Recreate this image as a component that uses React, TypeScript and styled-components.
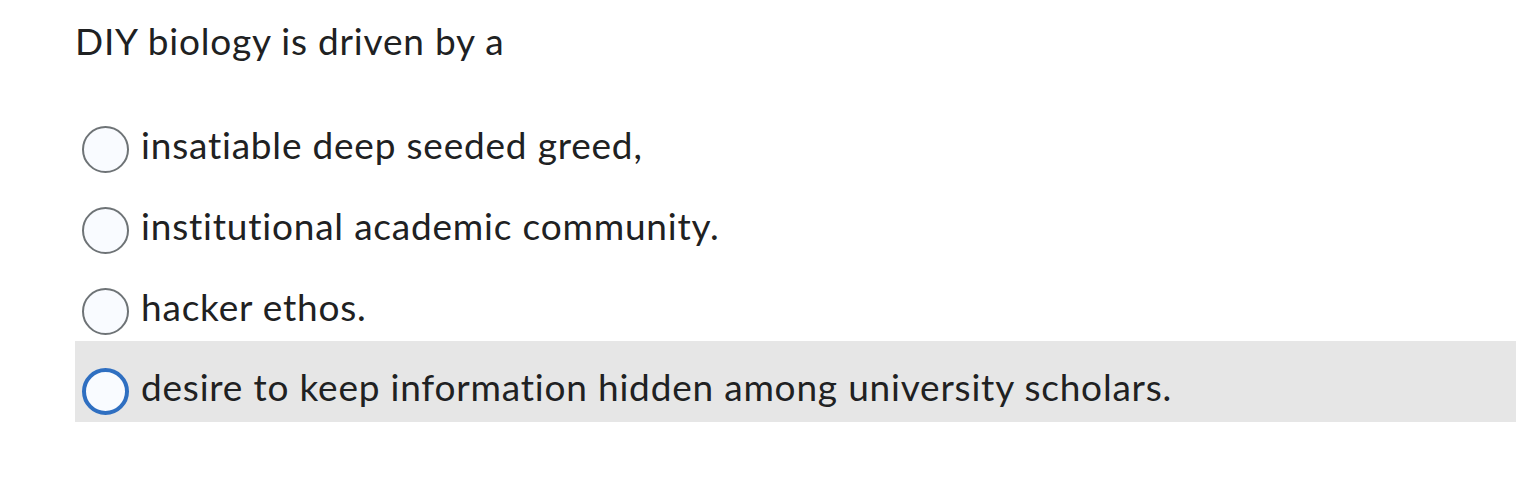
import React from 'react'
import styled, { createGlobalStyle } from 'styled-components'
// ______________________________________________________
//
const GlobalStyle = createGlobalStyle`
  body {
    margin: 0;
    background: #ffffff;
    font-family: Lato, "Open Sans", sans-serif;
    color: #202122;
    font-variant-ligatures: none;
  }
`
// ______________________________________________________
//
type Option = {
  label: string
  focused?: boolean
}

const options: Option[] = [
  { label: 'insatiable deep seeded greed,' },
  { label: 'institutional academic community.' },
  { label: 'hacker ethos.' },
  { label: 'desire to keep information hidden among university scholars.', focused: true },
]
// ______________________________________________________
//
const Page = styled.div`
  padding: 19px 0 0 75px;
`

const Question = styled.div`
  font-size: 37px;
  line-height: 44.4px;
  letter-spacing: 0.8px;
  margin-bottom: 35.6px;
`

const List = styled.div`
  display: flex;
  flex-direction: column;
`

const Row = styled.label<{ $focused?: boolean }>`
  box-sizing: border-box;
  display: flex;
  align-items: flex-start;
  gap: 12px;
  height: 80.7px;
  padding: 24.2px 0 0 7px;
  background: ${(p) => (p.$focused ? '#e6e6e6' : 'transparent')};
`

const Radio = styled.span<{ $focused?: boolean }>`
  box-sizing: border-box;
  flex: 0 0 auto;
  width: 47px;
  height: 47px;
  margin-top: 3px;
  border-radius: 50%;
  background: #f9fbff;
  border: ${(p) => (p.$focused ? '4px solid #2f6fc1' : '2.3px solid #6e7376')};
`

const Label = styled.span`
  font-size: 37px;
  line-height: 44.4px;
  letter-spacing: 0.8px;
`
// ______________________________________________________
//
const App: React.FC = () => (
  <Page>
    <GlobalStyle />
    <Question>DIY biology is driven by a</Question>
    <List>
      {options.map((o) => (
        <Row key={o.label} $focused={o.focused}>
          <Radio $focused={o.focused} />
          <Label>{o.label}</Label>
        </Row>
      ))}
    </List>
  </Page>
)
// ______________________________________________________
//
export default App
